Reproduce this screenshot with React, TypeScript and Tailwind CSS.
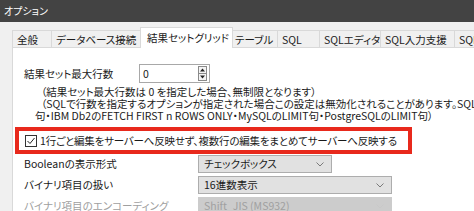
import React from "react";

const tabs = [
  { label: "全般", w: "w-[40px]" },
  { label: "データベース接続", w: "w-[90px]" },
  { label: "結果セットグリッド", w: "w-[93px]", active: true },
  { label: "テーブル", w: "w-[47px]" },
  { label: "SQL", w: "w-[42px]" },
  { label: "SQLエディタ", w: "w-[61px]" },
  { label: "SQL入力支援", w: "w-[74px]" },
  { label: "SQL整形", w: "w-[60px]" },
];

function Chevron({ disabled }: { disabled?: boolean }) {
  return (
    <svg width="8" height="5" viewBox="0 0 8 5">
      <polyline points="0.5,0.5 4,4 7.5,0.5" fill="none" stroke={disabled ? "#c8c8c8" : "#7a7a7a"} strokeWidth="1" />
    </svg>
  );
}

function Combo({ value, w, disabled }: { value: string; w: string; disabled?: boolean }) {
  return (
    <div className={`${w} h-[18px] flex items-center justify-between pl-[5px] pr-[7px] border ${disabled ? "border-[#cccccc] bg-[#cccccc] text-[#a0a0a0]" : "border-[#adadad] bg-[#e1e1e1]"}`}>
      <span>{value}</span>
      <Chevron disabled={disabled} />
    </div>
  );
}

export default function App() {
  return (
    <div className="w-[474px] h-[211px] overflow-hidden bg-[#f0f0f0] text-[#1a1a1a] text-[10.5px] leading-[12px] font-['Noto_Sans_CJK_JP',sans-serif] [font-feature-settings:'palt']">
      {/* Title bar */}
      <div className="h-[22px] bg-[#434343] text-white text-[10px] pl-[4px] flex items-center">オプション</div>

      <div className="pl-[12px] pt-[5px]">
        {/* Tabs */}
        <div className="flex items-end h-[20px] whitespace-nowrap">
          {tabs.map((t, i) =>
            t.active ? (
              <div key={t.label} className={`${t.w} shrink-0 h-[21px] -mb-px -mx-[2px] relative z-10 bg-white border border-b-0 border-[#d9d9d9] pl-[6px] pt-[4px] overflow-hidden`}>
                {t.label}
              </div>
            ) : (
              <div key={t.label} className={`${t.w} shrink-0 h-[17px] bg-[#f0f0f0] border-t border-r border-[#d9d9d9] ${i === 0 ? "border-l" : ""} pl-[4px] pt-[3px] overflow-hidden`}>
                {t.label}
              </div>
            )
          )}
        </div>

        {/* Panel */}
        <div className="h-[200px] bg-white border-t border-l border-[#d9d9d9] pl-[11px] pt-[16px]">
          <div className="flex items-center h-[19px]">
            <span className="w-[115px]">結果セット最大行数</span>
            <div className="w-[71px] h-[19px] border border-[#a8a8a8] flex items-center justify-between pl-[3px] pr-[2px]">
              <span>0</span>
              <svg width="9" height="15" viewBox="0 0 9 15">
                <rect x="0.5" y="0.5" width="8" height="14" fill="#f4f4f4" stroke="#8a8a8a" />
                <line x1="0.5" y1="7.5" x2="8.5" y2="7.5" stroke="#8a8a8a" />
                <polygon points="4.5,2.5 7,5.5 2,5.5" fill="#222" />
                <polygon points="2,9.5 7,9.5 4.5,12.5" fill="#222" />
              </svg>
            </div>
          </div>

          <div className="mt-[3px] whitespace-nowrap">
            <div className="pl-[17px]">（結果セット最大行数は 0 を指定した場合、無制限となります）</div>
            <div className="pl-[17px]">（SQLで行数を指定するオプションが指定された場合この設定は無効化されることがあります。SQL Server</div>
            <div className="pl-[11px]">句・IBM Db2のFETCH FIRST n ROWS ONLY・MySQLのLIMIT句・PostgreSQLのLIMIT句）</div>
          </div>

          {/* highlighted option */}
          <div className="mt-[5px] -ml-[9px] w-[397px] h-[27px] border-4 border-[#e8291c] flex items-center pl-[6px] gap-[3px] whitespace-nowrap">
            <div className="w-[12px] h-[12px] border border-[#333] bg-white flex items-center justify-center">
              <svg width="10" height="10" viewBox="0 0 10 10">
                <polyline points="1.5,5 4,7.5 8.5,2" fill="none" stroke="#222" strokeWidth="1" />
              </svg>
            </div>
            <span className="tracking-[-0.2px]">1行ごと編集をサーバーへ反映せず、複数行の編集をまとめてサーバーへ反映する</span>
          </div>

          <div className="mt-px flex flex-col gap-[3px]">
            <div className="flex items-center">
              <span className="w-[174px]">Booleanの表示形式</span>
              <Combo value="チェックボックス" w="w-[134px]" />
            </div>
            <div className="flex items-center">
              <span className="w-[174px]">バイナリ項目の扱い</span>
              <Combo value="16進数表示" w="w-[194px]" />
            </div>
            <div className="flex items-center text-[#a0a0a0]">
              <span className="w-[174px]">バイナリ項目のエンコーディング</span>
              <Combo value="Shift_JIS (MS932)" w="w-[194px]" disabled />
            </div>
          </div>
        </div>
      </div>
    </div>
  );
}
